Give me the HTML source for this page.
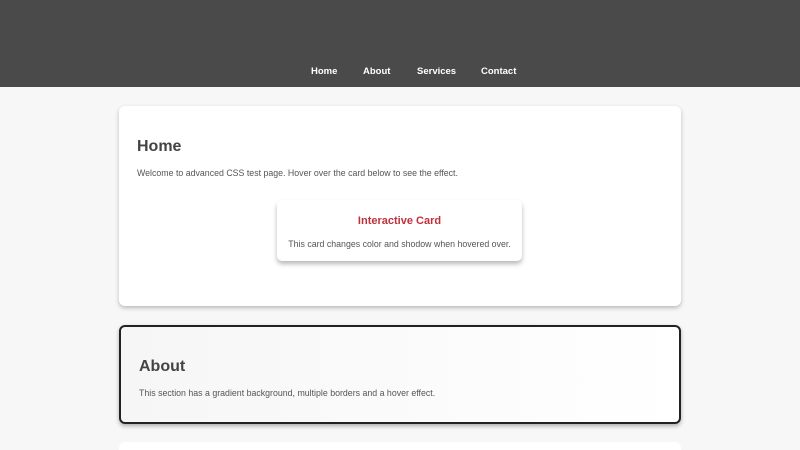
<!DOCTYPE html>
<html><head><style>
*{margin:0;padding:0;box-sizing:border-box}
html,body{width:800px;height:450px;overflow:hidden}
body{background:#f7f7f7;font-family:"Liberation Sans",sans-serif;color:#444;position:relative}
header{height:87px;background:#4a4a4a;position:relative}
nav{position:absolute;top:66px;left:0;width:800px;font-size:9.5px;font-weight:bold;color:#fff}
nav span{position:absolute}
.s{position:absolute;left:119px;width:562px;background:#fff;border-radius:6px}
h2{font-size:16px;font-weight:bold;color:#444;position:absolute;left:18px}
p{font-size:8.8px;color:#555;position:absolute;left:18px}
.card{position:absolute;left:158px;top:94px;width:245px;height:61px;background:#fff;border-radius:5px;box-shadow:0 3px 5px rgba(0,0,0,.28);text-align:center}
</style></head><body>
<header><nav>
<span style="left:311px">Home</span><span style="left:363px">About</span><span style="left:417px">Services</span><span style="left:481px">Contact</span>
</nav></header>
<div class="s" style="top:106px;height:200px;box-shadow:0 2px 4px rgba(0,0,0,.25)">
<h2 style="top:32px">Home</h2>
<p style="top:62px">Welcome to advanced CSS test page. Hover over the card below to see the effect.</p>
<div class="card">
<div style="position:absolute;top:15px;width:100%;font-size:11px;font-weight:bold;color:#c0303a">Interactive Card</div>
<div style="position:absolute;top:39px;width:100%;font-size:8.8px;color:#555">This card changes color and shodow when hovered over.</div>
</div>
</div>
<div class="s" style="top:325px;height:99px;border:2px solid #222;background:linear-gradient(90deg,#f6f6f6,#fff);box-shadow:0 2px 4px rgba(0,0,0,.3)">
<h2 style="top:31px">About</h2>
<p style="top:61px">This section has a gradient background, multiple borders and a hover effect.</p>
</div>
<div class="s" style="top:442px;height:8px;border-radius:6px 6px 0 0"></div>
</body></html>
